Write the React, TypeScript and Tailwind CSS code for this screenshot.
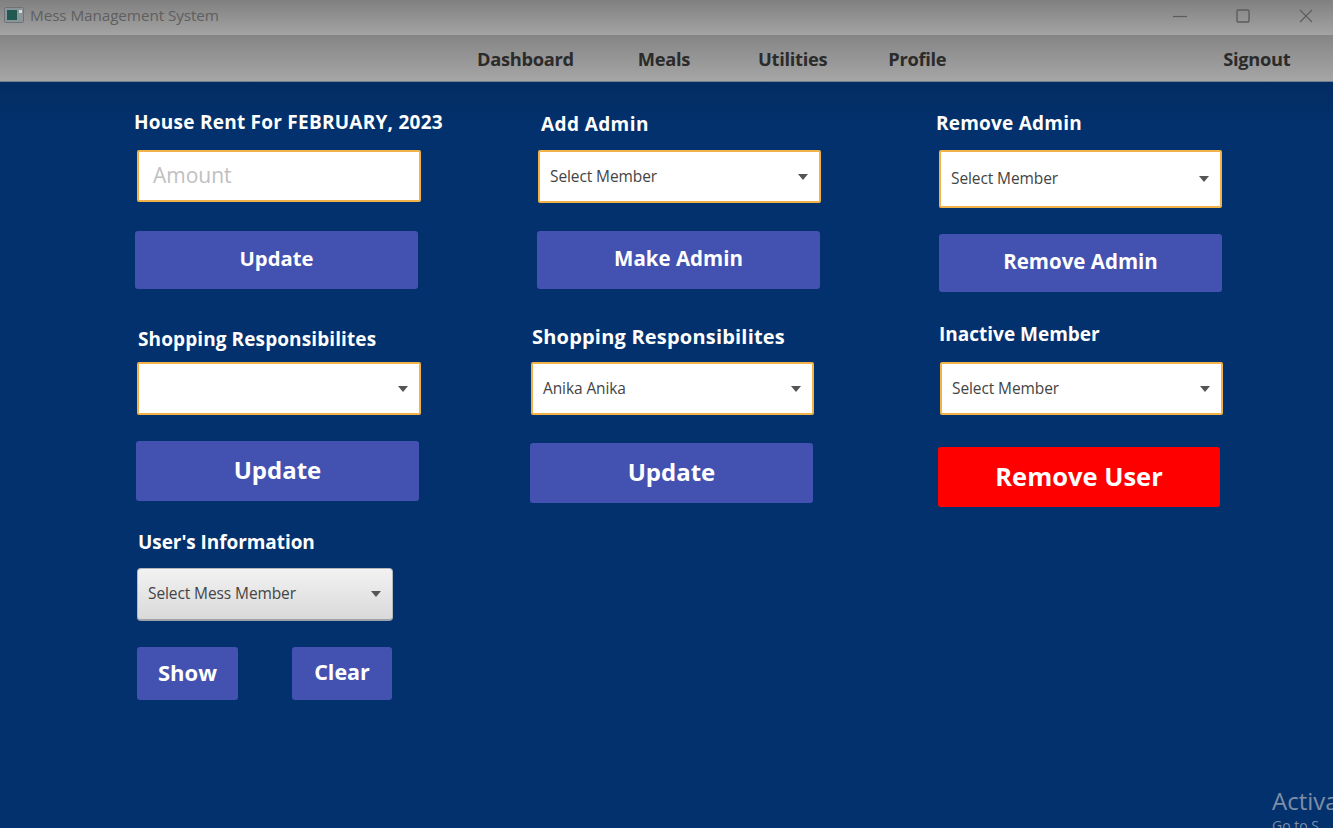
const font = { fontFamily: '"Open Sans", "Noto Sans", sans-serif' };

function Label({ text, className }: { text: string; className: string }) {
  return <div className={`h-[26px] leading-[26px] whitespace-nowrap font-bold text-white ${className}`}>{text}</div>;
}

function Combo({ text, className, gray }: { text?: string; className: string; gray?: boolean }) {
  return (
    <div
      className={`flex items-center justify-between pl-[10px] pr-[11px] text-[15.5px] tracking-[-0.1px] text-[#444] ${
        gray
          ? "rounded-[4px] border border-[#b4b8bd] border-b-2 border-b-[#9ea3aa] bg-gradient-to-b from-[#f2f2f2] to-[#d9d9d9]"
          : "rounded-[2px] border-2 border-[#f2b24a] bg-white"
      } ${className}`}
    >
      <span className="whitespace-nowrap">{text}</span>
      <span className="h-0 w-0 border-x-[5.5px] border-t-[6px] border-x-transparent border-t-[#555]" />
    </div>
  );
}

function Btn({ text, className }: { text: string; className: string }) {
  return (
    <div className={`flex items-center justify-center rounded-[3px] bg-[#4351b1] font-bold text-white ${className}`}>
      {text}
    </div>
  );
}

export default function App() {
  return (
    <div className="flex h-[828px] w-[1333px] flex-col overflow-hidden bg-[#03306b]" style={font}>
      <div className="flex h-[35px] shrink-0 items-center justify-between bg-gradient-to-b from-[#808080] to-[#a4a4a4] pb-[4px] pl-[4px] pr-[20px]">
        <div className="flex items-center gap-[6px]">
          <svg width="20" height="17" viewBox="0 0 20 17">
            <rect x="0.5" y="0.5" width="19" height="15" rx="1" fill="#8b9498" stroke="#6e7378" />
            <rect x="3" y="3" width="10" height="10" fill="#1f5a50" />
            <rect x="15" y="3" width="3" height="3" fill="#d8dcdc" />
          </svg>
          <span className="text-[15.3px] tracking-[-0.1px] text-[#5f5f5f]">Mess Management System</span>
        </div>
        <div className="flex items-center gap-[49px]">
          <svg width="14" height="14" viewBox="0 0 14 14">
            <path d="M0 7.5H14" stroke="#5c5c5c" strokeWidth="1.2" />
          </svg>
          <svg width="14" height="14" viewBox="0 0 14 14">
            <rect x="1" y="1" width="12" height="12" rx="1" fill="none" stroke="#5c5c5c" strokeWidth="1.4" />
          </svg>
          <svg width="14" height="14" viewBox="0 0 14 14">
            <path d="M1 1L13 13M13 1L1 13" stroke="#5c5c5c" strokeWidth="1.1" />
          </svg>
        </div>
      </div>

      <div className="flex h-[47px] shrink-0 items-center border-b border-b-[#6f7f92] bg-gradient-to-b from-[#858585] to-[#a6a6a6] pt-[2px] text-[18.3px] font-bold tracking-[-0.3px] text-[#2b2b2b]">
        <span className="ml-[477px]">Dashboard</span>
        <span className="ml-[64px]">Meals</span>
        <span className="ml-[68px]">Utilities</span>
        <span className="ml-[61px]">Profile</span>
        <span className="ml-[277px]">Signout</span>
      </div>

      <div className="relative flex flex-1 bg-gradient-to-b from-[#022c62] to-[#03316d] to-[6%]">
        <div className="ml-[134px] flex w-[396px] shrink-0 flex-col pt-[27px]">
          <Label text="House Rent For FEBRUARY, 2023" className="text-[19px] tracking-[0.25px]" />
          <div className="ml-[3px] mt-[15px] flex h-[52px] w-[284px] items-center rounded-[2px] border-2 border-[#f2b24a] bg-white pl-[14px] text-[21px] text-[#c0c0c0]">
            Amount
          </div>
          <Btn text="Update" className="ml-[1px] mt-[29px] h-[58px] w-[283px] pb-[3px] text-[20.3px]" />
          <Label text="Shopping Responsibilites" className="ml-[4px] mt-[37px] text-[19px] tracking-[0.1px]" />
          <Combo className="ml-[3px] mt-[10px] h-[53px] w-[284px]" />
          <Btn text="Update" className="ml-[2px] mt-[26px] h-[60px] w-[283px] pb-[2px] text-[24px]" />
          <Label text="User's Information" className="ml-[4px] mt-[28px] text-[19px] tracking-[-0.07px]" />
          <Combo gray text="Select Mess Member" className="ml-[3px] mt-[13px] h-[53px] w-[256px]" />
          <div className="ml-[3px] mt-[26px] flex w-[255px] justify-between">
            <Btn text="Show" className="h-[53px] w-[101px] pb-[2px] text-[22px]" />
            <Btn text="Clear" className="h-[53px] w-[100px] pb-[2px] text-[21.5px]" />
          </div>
        </div>

        <div className="flex w-[406px] shrink-0 flex-col pt-[29px]">
          <Label text="Add Admin" className="ml-[11px] text-[19px] tracking-[0.4px]" />
          <Combo text="Select Member" className="ml-[8px] mt-[13px] h-[53px] w-[283px]" />
          <Btn text="Make Admin" className="ml-[7px] mt-[28px] h-[58px] w-[283px] pb-[3px] text-[20.5px]" />
          <Label text="Shopping Responsibilites" className="ml-[2px] mt-[35px] text-[20px] tracking-[0.2px]" />
          <Combo text="Anika Anika" className="ml-[1px] mt-[12px] h-[53px] w-[283px]" />
          <Btn text="Update" className="mt-[28px] h-[60px] w-[283px] pb-[2px] text-[24px]" />
        </div>

        <div className="flex w-[300px] shrink-0 flex-col pt-[28px]">
          <Label text="Remove Admin" className="text-[19px] tracking-[0.22px]" />
          <Combo text="Select Member" className="ml-[3px] mt-[14px] h-[58px] w-[283px]" />
          <Btn text="Remove Admin" className="ml-[3px] mt-[26px] h-[58px] w-[283px] pb-[3px] text-[20.5px]" />
          <Label text="Inactive Member" className="ml-[3px] mt-[29px] text-[19px]" />
          <Combo text="Select Member" className="ml-[4px] mt-[15px] h-[53px] w-[283px]" />
          <div className="ml-[2px] mt-[32px] flex h-[60px] w-[282px] items-center justify-center rounded-[3px] bg-[#ff0000] pb-[2px] text-[25.5px] font-bold text-white">
            Remove User
          </div>
        </div>

        <div className="absolute left-[1272px] top-[704px] whitespace-nowrap text-[24px] leading-[30px] text-[#7e8ea6]">
          Activa
          <div className="text-[14px] leading-[20px]">Go to S</div>
        </div>
      </div>
    </div>
  );
}
